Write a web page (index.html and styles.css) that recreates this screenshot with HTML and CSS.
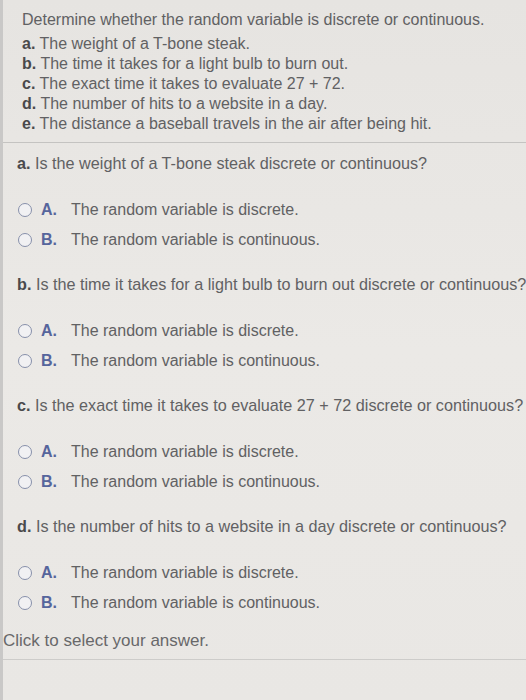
FILE: index.html
```html
<!DOCTYPE html>
<html>
<head>
<meta charset="utf-8">
<link rel="stylesheet" href="styles.css">
</head>
<body>
<div class="page">
  <div class="intro">
    <div class="lead">Determine whether the random variable is discrete or continuous.</div>
    <div class="item"><b>a.</b> The weight of a T-bone steak.</div>
    <div class="item"><b>b.</b> The time it takes for a light bulb to burn out.</div>
    <div class="item"><b>c.</b> The exact time it takes to evaluate 27 + 72.</div>
    <div class="item"><b>d.</b> The number of hits to a website in a day.</div>
    <div class="item"><b>e.</b> The distance a baseball travels in the air after being hit.</div>
  </div>
  <div class="rule"></div>
  <div class="questions">
    <div class="question">
      <div class="qtext"><b>a.</b> Is the weight of a T-bone steak discrete or continuous?</div>
      <div class="options">
        <div class="option"><span class="radio"></span><span class="letter">A.</span><span>The random variable is discrete.</span></div>
        <div class="option"><span class="radio"></span><span class="letter">B.</span><span>The random variable is continuous.</span></div>
      </div>
    </div>
    <div class="question">
      <div class="qtext"><b>b.</b> Is the time it takes for a light bulb to burn out discrete or continuous?</div>
      <div class="options">
        <div class="option"><span class="radio"></span><span class="letter">A.</span><span>The random variable is discrete.</span></div>
        <div class="option"><span class="radio"></span><span class="letter">B.</span><span>The random variable is continuous.</span></div>
      </div>
    </div>
    <div class="question">
      <div class="qtext"><b>c.</b> Is the exact time it takes to evaluate 27 + 72 discrete or continuous?</div>
      <div class="options">
        <div class="option"><span class="radio"></span><span class="letter">A.</span><span>The random variable is discrete.</span></div>
        <div class="option"><span class="radio"></span><span class="letter">B.</span><span>The random variable is continuous.</span></div>
      </div>
    </div>
    <div class="question">
      <div class="qtext"><b>d.</b> Is the number of hits to a website in a day discrete or continuous?</div>
      <div class="options">
        <div class="option"><span class="radio"></span><span class="letter">A.</span><span>The random variable is discrete.</span></div>
        <div class="option"><span class="radio"></span><span class="letter">B.</span><span>The random variable is continuous.</span></div>
      </div>
    </div>
  </div>
  <div class="footer">Click to select your answer.</div>
  <div class="rule rule-bottom"></div>
</div>
</body>
</html>
```

FILE: styles.css
```css
html, body {
  margin: 0;
  padding: 0;
}
body {
  width: 526px;
  height: 700px;
  overflow: hidden;
  background: linear-gradient(180deg, #e6e4e1 0%, #ebe9e6 50%, #e9e7e4 100%);
  font-family: "Liberation Sans", Arial, sans-serif;
  font-size: 16px;
  color: #616163;
}
.page {
  display: flex;
  flex-direction: column;
  border-left: 3px solid #c9c8c7;
  min-height: 700px;
  box-sizing: border-box;
}
b {
  color: #4a4a4c;
  font-weight: bold;
}
.intro {
  padding: 10px 0 0 19px;
  line-height: 20px;
  white-space: nowrap;
}
.lead {
  margin-bottom: 4px;
}
.rule {
  height: 1px;
  background: #c4c3c1;
  margin-top: 8px;
}
.questions {
  display: flex;
  flex-direction: column;
  gap: 19px;
  padding-top: 10px;
}
.qtext {
  padding-left: 14px;
  line-height: 20px;
  white-space: nowrap;
  font-size: 16.2px;
}
.options {
  display: flex;
  flex-direction: column;
  margin-top: 22px;
}
.option {
  display: flex;
  align-items: center;
  height: 30px;
  padding-left: 15px;
  white-space: nowrap;
}
.radio {
  width: 12px;
  height: 12px;
  border: 1.5px solid #8790aa;
  border-radius: 50%;
  background: #f1f1f3;
  flex: none;
}
.letter {
  color: #56659c;
  font-weight: bold;
  width: 30px;
  margin-left: 9px;
}
.footer {
  margin-top: 13px;
  padding-left: 0;
  line-height: 20px;
  font-size: 17px;
  color: #68686a;
}
.rule-bottom {
  margin-top: 8px;
  background: #cdccca;
}
```
